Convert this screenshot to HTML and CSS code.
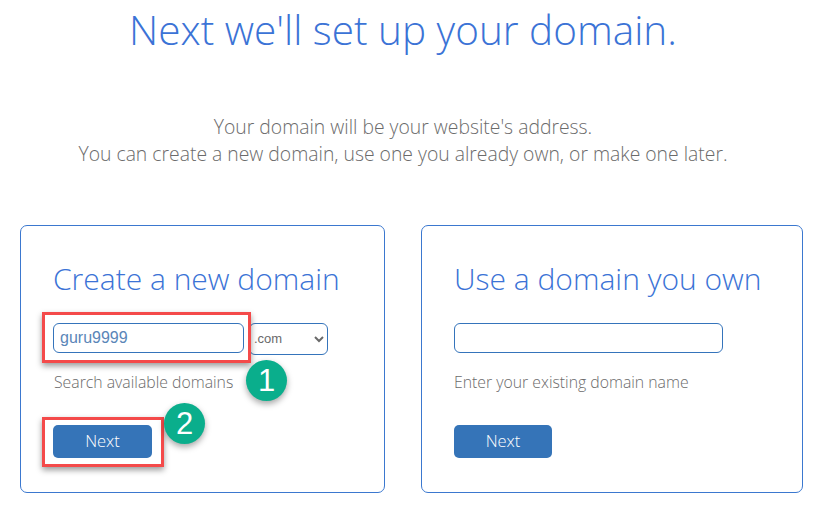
FILE: index.html
```html
<!DOCTYPE html>
<html lang="en">
<head>
  <meta charset="UTF-8">
  <title>Set up your domain</title>
  <link rel="stylesheet" href="styles.css">
</head>
<body>
  <header class="intro">
    <h1>Next we'll set up your domain.</h1>
    <p>Your domain will be your website's address.<br>You can create a new domain, use one you already own, or make one later.</p>
  </header>

  <main class="cards">
    <section class="card card-new">
      <h2>Create a new domain</h2>
      <div class="field-row">
        <input class="text-input input-new" type="text" value="guru9999">
        <select class="tld">
          <option>.com</option>
        </select>
      </div>
      <p class="hint">Search available domains</p>
      <button class="next" type="button">Next</button>

      <!-- annotations drawn on top of the screenshot -->
      <span class="mark mark-input"></span>
      <span class="mark mark-button"></span>
      <span class="step step-one">1</span>
      <span class="step step-two">2</span>
    </section>

    <section class="card card-own">
      <h2>Use a domain you own</h2>
      <div class="field-row">
        <input class="text-input input-own" type="text">
      </div>
      <p class="hint">Enter your existing domain name</p>
      <button class="next" type="button">Next</button>
    </section>
  </main>
</body>
</html>
```

FILE: styles.css
```css
body {
  margin: 0;
  font-family: 'Open Sans', sans-serif;
  font-weight: 300;
  background-color: #fff;
  color: #666;
}

.intro {
  padding-right: 9px;
  text-align: center;
}

.intro h1 {
  margin: 0;
  padding-top: 2px;
  font-size: 40.5px;
  line-height: 55px;
  font-weight: 300;
  color: #3b73d6;
}

.intro p {
  margin: 0;
  padding-top: 56px;
  font-size: 19.35px;
  line-height: 27px;
  color: #6b6b6b;
}

.cards {
  display: flex;
  gap: 36px;
  padding: 58px 0 0 20px;
}

.card {
  position: relative;
  box-sizing: border-box;
  height: 268px;
  padding: 33px 32px 0;
  border: 1px solid #3b78cf;
  border-radius: 7px;
}

.card-new {
  width: 365px;
}

.card-own {
  width: 382px;
}

.card h2 {
  margin: 0;
  font-size: 30px;
  line-height: 40px;
  font-weight: 300;
  color: #3b73d6;
}

.field-row {
  display: flex;
  align-items: flex-start;
  gap: 5px;
  margin-top: 24px;
}

.text-input {
  box-sizing: border-box;
  height: 30px;
  padding: 0 6px;
  border: 1px solid #3574bb;
  border-radius: 6px;
  background: #fff;
  font-family: 'Liberation Sans', Arial, sans-serif;
  font-size: 16px;
  color: #5a86b8;
}

.input-new {
  width: 191px;
}

.input-own {
  width: 269px;
}

.tld {
  box-sizing: border-box;
  width: 79px;
  height: 32px;
  padding: 0 0 2px;
  border: 1px solid #3574bb;
  border-radius: 6px;
  background: #fff;
  font-family: 'Liberation Sans', Arial, sans-serif;
  font-size: 13px;
  color: #6a6a6a;
}

.hint {
  margin: 0;
  padding-top: 18px;
  font-size: 15.8px;
  line-height: 22px;
  color: #6b6b6b;
}

.card-new .hint {
  padding-top: 16px;
  padding-left: 1px;
}

.next {
  display: block;
  width: 99px;
  height: 33px;
  margin-top: 32px;
  padding: 0 0 2px;
  border: 0;
  border-radius: 5px;
  background-color: #3574b8;
  font-family: 'Open Sans', sans-serif;
  font-size: 16.5px;
  font-weight: 300;
  color: #fff;
}

.card-own .next {
  width: 98px;
}

.mark {
  position: absolute;
  box-sizing: border-box;
  border: 3px solid #f44a4a;
  box-shadow: 0 3px 6px rgba(0, 0, 0, 0.4);
}

.mark-input {
  left: 21px;
  top: 86px;
  width: 209px;
  height: 51px;
}

.mark-button {
  left: 21px;
  top: 191px;
  width: 122px;
  height: 50px;
}

.step {
  position: absolute;
  width: 41px;
  height: 41px;
  border-radius: 50%;
  background-color: #0aae8c;
  box-shadow: 0 3px 6px rgba(0, 0, 0, 0.35);
  font-family: 'Liberation Sans', Arial, sans-serif;
  font-size: 31px;
  font-weight: 400;
  line-height: 41px;
  text-align: center;
  color: #fff;
}

.step-one {
  left: 225px;
  top: 134px;
}

.step-two {
  left: 143px;
  top: 177px;
}
```
